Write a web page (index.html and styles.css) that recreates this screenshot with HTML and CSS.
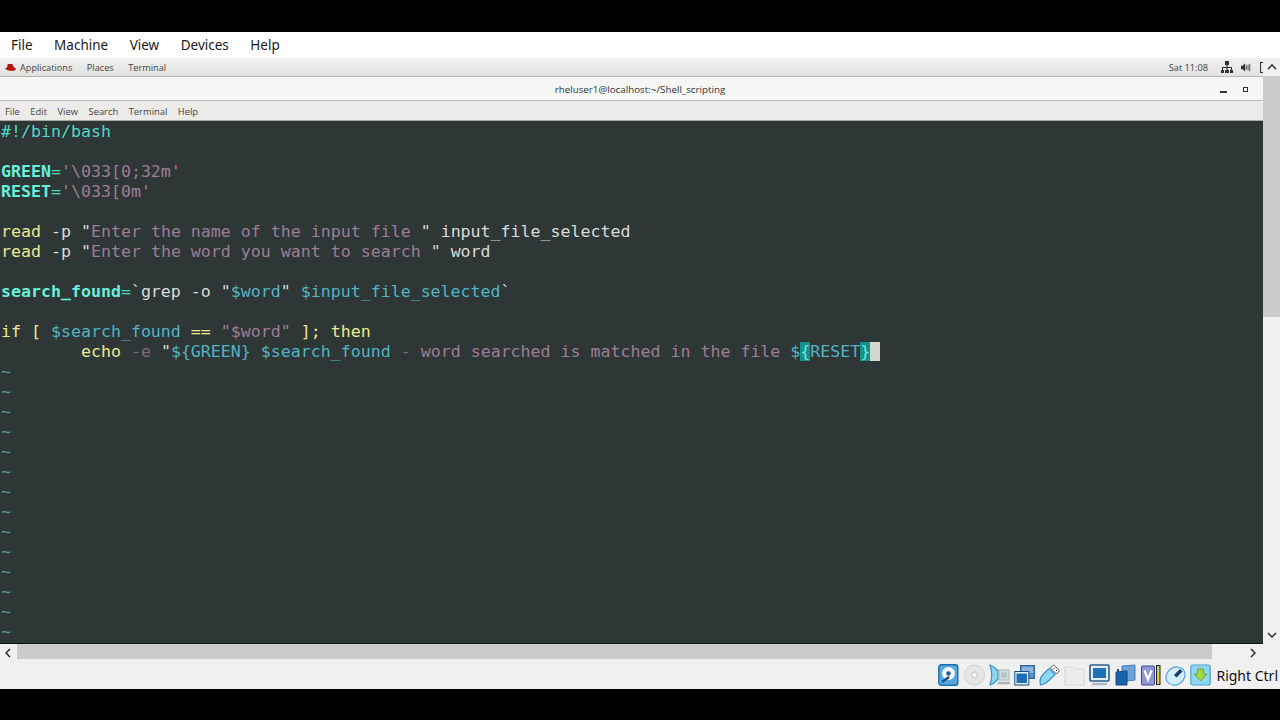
FILE: index.html
```html
<!DOCTYPE html>
<html lang="en">
<head>
<meta charset="utf-8">
<title>VM terminal</title>
<link rel="stylesheet" href="styles.css">
</head>
<body>
<div class="letterbox-top"></div>
<nav class="vm-menu"><span>File</span><span>Machine</span><span>View</span><span>Devices</span><span>Help</span></nav>
<div class="guest">
  <div class="guest-main">
    <div class="gnome-bar">
      <div class="gnome-left">
        <svg class="hat" viewBox="0 0 12 10"><path d="M0 6 L2 5 L3 1.500 C4 .5 5.500 1.500 7 1 C8.500 .8 9 3 9.500 4.500 L12 6 C12 8.500 9.500 9 7 8.500 C4 8.500 1 8 0 6Z" fill="#b01a18"/></svg>
        <span>Applications</span><span>Places</span><span>Terminal</span>
      </div>
      <div class="gnome-right">
        <span>Sat 11:08</span>
        <svg class="tray net" viewBox="0 0 12 12"><path d="M4 0h4v4H6.600v2H11v3h1v3H9V9h1V7H6.600v2H8v3H4V9h1.400V7H2v2h1v3H0V9h1V6h4.400V4H4z" fill="#2e3436"/></svg>
        <svg class="tray vol" viewBox="0 0 12 10"><path d="M0 3h2l3-3v10L2 7H0z" fill="#2e3436"/><path d="M6.500 2.500v5M8.500 1.500v7M10.500 .5v9" stroke="#555" stroke-width="1.200"/></svg>
        <span class="bat-edge"></span>
      </div>
    </div>
    <div class="title-bar">
      <span class="title-text">rheluser1@localhost:~/Shell_scripting</span>
      <span class="win-btns"><i class="min"></i><i class="max"></i></span>
    </div>
    <div class="term-menu"><span>File</span><span>Edit</span><span>View</span><span>Search</span><span>Terminal</span><span>Help</span></div>
    <pre class="term"><span class="cy">#!/bin/bash</span>

<b class="var">GREEN</b><span class="cy">=</span><span class="st">'\033[0;32m'</span>
<b class="var">RESET</b><span class="cy">=</span><span class="st">'\033[0m'</span>

<span class="kw">read</span> <span class="wh">-p</span> <span class="st"><span class="wh">"</span>Enter the name of the input file <span class="wh">"</span></span> <span class="wh">input_file_selected</span>
<span class="kw">read</span> <span class="wh">-p</span> <span class="st"><span class="wh">"</span>Enter the word you want to search <span class="wh">"</span></span> <span class="wh">word</span>

<b class="var">search_found</b><span class="cy">=</span><span class="wh">`grep -o "</span><span class="bl">$word</span><span class="wh">"</span> <span class="bl">$input_file_selected</span><span class="wh">`</span>

<span class="kw">if [</span> <span class="bl">$search_found</span> <span class="kw">==</span> <span class="st">"$word"</span> <span class="kw">]; then</span>
        <span class="kw">echo</span> <span class="dim">-e</span> <span class="wh">"</span><span class="bl">${GREEN}</span> <span class="bl">$search_found</span> <span class="dim">-</span> <span class="st">word searched is matched in the file</span> <span class="bl">$</span><span class="match">{</span><span class="bl">RESET</span><span class="match">}</span><span class="cursor"> </span>
<span class="tl">~</span>
<span class="tl">~</span>
<span class="tl">~</span>
<span class="tl">~</span>
<span class="tl">~</span>
<span class="tl">~</span>
<span class="tl">~</span>
<span class="tl">~</span>
<span class="tl">~</span>
<span class="tl">~</span>
<span class="tl">~</span>
<span class="tl">~</span>
<span class="tl">~</span>
<span class="tl">~</span></pre>
  </div>
  <div class="v-scroll">
    <svg class="arrow" viewBox="0 0 10 6"><path d="M1 5l4-4 4 4" fill="none" stroke="#222" stroke-width="1.400"/></svg>
    <div class="v-track"><div class="v-thumb"></div></div>
    <svg class="arrow" viewBox="0 0 10 6"><path d="M1 1l4 4 4-4" fill="none" stroke="#222" stroke-width="1.400"/></svg>
  </div>
</div>
<div class="h-scroll">
  <svg class="h-arrow" viewBox="0 0 6 10"><path d="M5 1L1 5l4 4" fill="none" stroke="#222" stroke-width="1.400"/></svg>
  <div class="h-track"><div class="h-thumb"></div></div>
  <svg class="h-arrow end" viewBox="0 0 6 10"><path d="M1 1l4 4-4 4" fill="none" stroke="#222" stroke-width="1.400"/></svg>
</div>
<div class="status">
  <svg class="ico" viewBox="0 0 21 22"><rect x=".8" y=".8" width="19" height="20.400" rx="2.500" fill="#56a8dc" stroke="#1c6fa8" stroke-width="1.400"/><circle cx="10.500" cy="9.500" r="6.500" fill="#f2f7fa"/><circle cx="10.500" cy="9.500" r="2.200" fill="#1d5f94"/><path d="M4 18l7-5" stroke="#174f80" stroke-width="2.400"/></svg>
  <svg class="ico" viewBox="0 0 21 22"><circle cx="10.500" cy="11" r="10" fill="#e6e6e6" stroke="#cfcfcf"/><circle cx="10.500" cy="11" r="3" fill="#f6f6f6" stroke="#c2c2c2"/></svg>
  <svg class="ico" viewBox="0 0 21 22"><path d="M1 1c4 1 6 4 8 6v8c-2 2-4 5-8 6 2-6 2-14 0-20z" fill="#8fd6f2" stroke="#3a94c4" stroke-width="1.200"/><rect x="10" y="6" width="10" height="10" fill="#d4dfe5" stroke="#a5b3ba"/><rect x="12" y="8" width="6" height="6" fill="#b6c4cc"/><path d="M9 19h12" stroke="#aab4ba" stroke-width="2.500"/></svg>
  <svg class="ico" viewBox="0 0 21 22"><rect x="6.500" y="1.500" width="14" height="13" fill="#5c8cc0" stroke="#32608f"/><rect x="8" y="3" width="11" height="6" fill="#8db4dc"/><rect x=".8" y="7.500" width="14" height="13.500" fill="#e8eef4" stroke="#174f80"/><rect x="2.500" y="9.500" width="10.500" height="9.500" fill="#1f6fb8"/></svg>
  <svg class="ico" viewBox="0 0 21 22"><path d="M1.500 21c-1-4 0-8 2.500-10.500l6-6 6 6-6 6c-2.500 2.500-5 4-8.500 4.500z" fill="#8fd8f4" stroke="#3a94c4" stroke-width="1.200"/><path d="M11.500 4l3-3.200 6 6-3 3.200z" fill="#fafafa" stroke="#555"/><path d="M14.500 4l1 1M17 6l1 1" stroke="#333"/></svg>
  <svg class="ico" viewBox="0 0 21 22"><path d="M1 6V3h8l1 2h10v16H1z" fill="#ececec" stroke="#d6d6d6"/></svg>
  <svg class="ico" viewBox="0 0 21 22"><rect x="1" y="1" width="19" height="16" rx="1" fill="#e4eef6" stroke="#2c5f8c" stroke-width="1.600"/><rect x="4" y="4" width="13" height="10" fill="#1f72b8"/><path d="M3 20h15" stroke="#aebccb" stroke-width="2.500"/></svg>
  <svg class="ico" viewBox="0 0 21 22"><path d="M7 2l13-1v15l-8 1V7H7z" fill="#6ba2dc" stroke="#4a7fb6"/><path d="M1 8l11-1v14H1z" fill="#1a60aa" stroke="#174f80"/><path d="M3 5v3" stroke="#174f80" stroke-width="2"/></svg>
  <svg class="ico" viewBox="0 0 21 22"><rect x="1.500" y="2" width="13" height="19" rx="1" fill="#8f98d4" stroke="#3c4a96"/><path d="M4.500 6.500l3.500 9 3.500-9" fill="none" stroke="#fff" stroke-width="2.200"/><rect x="16" y="1" width="4.500" height="20" fill="#222"/><rect x="17" y="2" width="2.500" height="9" fill="#b9d34a"/><rect x="17" y="11" width="2.500" height="9" fill="#e6c23c"/></svg>
  <svg class="ico" viewBox="0 0 21 22"><ellipse cx="10.500" cy="12" rx="10" ry="8.500" transform="rotate(-35 10.500 12)" fill="#d2eefc" stroke="#4ba3d8" stroke-width="1.200"/><path d="M9 11l6-6 2.500 2.500-6 6z" fill="#123f70"/></svg>
  <svg class="ico" viewBox="0 0 21 22"><rect x=".8" y="1" width="19.400" height="20" rx="2" fill="#8ed6f4" stroke="#4ca3d0" stroke-width="1.200"/><path d="M7.500 5h6v5h3.500l-6.500 7-6.500-7h3.500z" fill="#a6d83c" stroke="#5c9a1c" stroke-width=".8"/></svg>
  <span class="host-key">Right Ctrl</span>
</div>
<div class="letterbox-bottom"></div>
</body>
</html>
```
FILE: styles.css
```css
* { box-sizing: border-box; }
html, body { margin: 0; padding: 0; }
body { width: 1280px; height: 720px; overflow: hidden; background: #000; font-family: "Open Sans", "Liberation Sans", sans-serif; display: flex; flex-direction: column; }
.letterbox-top { height: 32px; background: #000; flex: none; }
.letterbox-bottom { flex: 1; background: #000; }
.vm-menu { height: 26px; flex: none; background: #fff; display: flex; align-items: center; gap: 21.500px; padding-left: 11px; font-family: "Noto Sans", sans-serif; font-size: 13.500px; color: #1a1a1a; }
.guest { height: 586px; flex: none; display: flex; }
.guest-main { flex: 1; min-width: 0; display: flex; flex-direction: column; }
.gnome-bar { height: 19px; flex: none; background: linear-gradient(#f0f0ee, #e2e2e0); border-bottom: 1px solid #b5b5b3; display: flex; justify-content: space-between; align-items: center; padding-left: 5px; font-size: 9.200px; color: #444; }
.gnome-left { display: flex; align-items: center; }
.gnome-left span { margin-left: 14.500px; }
.gnome-left span:first-of-type { margin-left: 4px; }
.hat { width: 11px; height: 9px; }
.gnome-right { display: flex; align-items: center; }
.tray.net { width: 12px; height: 12px; margin-left: 13px; }
.tray.vol { width: 10px; height: 9px; margin-left: 8px; }
.bat-edge { width: 3px; height: 11px; border: 1px solid #333; border-right: 0; margin-left: 9px; }
.title-bar { height: 24px; flex: none; background: #f6f6f5; border-bottom: 1px solid #bbb; position: relative; display: flex; align-items: center; justify-content: center; padding: 1px 0 0 17px; font-size: 9.800px; color: #2e3436; }
.win-btns { position: absolute; right: 15px; top: 9px; display: flex; gap: 16px; align-items: center; height: 7px; }
.win-btns .min { width: 7px; height: 1.500px; background: #2e3436; margin-top: 5px; }
.win-btns .max { width: 5px; height: 5px; border: 1.500px solid #2e3436; }
.term-menu { height: 20px; flex: none; background: #ecebe9; border-bottom: 1px solid #a8a8a6; display: flex; align-items: center; gap: 10.500px; padding: 1px 0 0 5px; font-size: 9.400px; color: #444; }
.term { flex: 1; margin: 0; background: #2f3636; padding: 1px 0 0 1px; font-family: "DejaVu Sans Mono", monospace; font-size: 16.600px; line-height: 20px; color: #d3d7cf; overflow: hidden; white-space: pre; border-bottom: 1px solid #111; }
.term b { font-weight: 700; }
.cy { color: #4fd8c4; }
.var { color: #66f0dc; }
.st { color: #9c7d95; }
.dim { color: #7d6a7a; }
.kw { color: #ebe98f; }
.wh { color: #d9dcd6; }
.bl { color: #52b4c4; }
.tl { color: #5b9c9c; }
.match { background: #12908a; color: #7fe0dc; }
.cursor { background: #d3d7cf; }
.v-scroll { width: 17px; flex: none; background: #f0f0f0; display: flex; flex-direction: column; align-items: center; }
.arrow { width: 10px; height: 6px; margin: 6px 0; flex: none; }
.v-track { flex: 1; width: 100%; }
.v-thumb { height: 241px; background: #cbcbcb; }
.h-scroll { height: 17px; flex: none; background: #f0f0f0; display: flex; align-items: center; padding-right: 24px; }
.h-arrow { width: 6px; height: 10px; margin: 0 6px 0 5px; flex: none; }
.h-arrow.end { margin: 0 0 0 4px; }
.h-track { flex: 1; height: 100%; padding-bottom: 2px; }
.h-thumb { width: 1195px; height: 100%; background: #cbcbcb; }
.status { height: 28px; flex: none; background: #f0f0f0; display: flex; align-items: center; justify-content: flex-end; gap: 4.200px; padding-right: 2px; }
.ico { width: 21px; height: 22px; flex: none; }
.host-key { font-family: "Noto Sans", sans-serif; font-size: 14px; color: #111; margin-left: 1px; }
```
